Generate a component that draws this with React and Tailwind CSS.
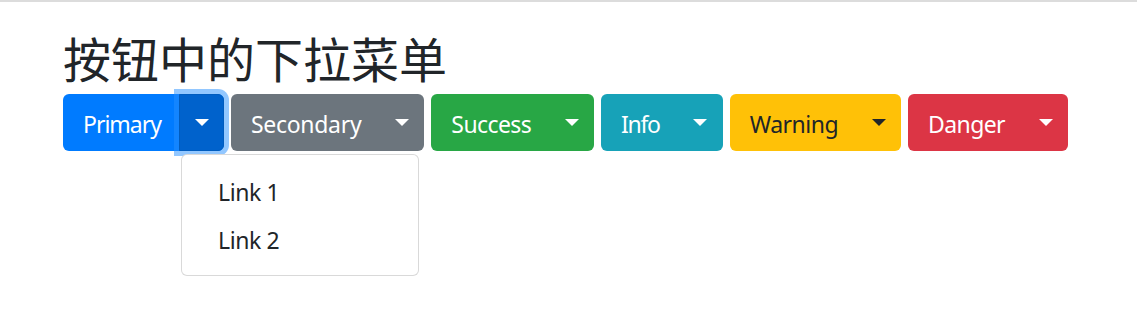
import React from "react";

const groups = [
  { label: "Primary", track: "tracking-[-1px]", bg: "bg-[#007bff]", text: "text-white", toggle: "bg-[#0062cc] border-[#005cbf] shadow-[0_0_0_5px_rgba(38,143,255,0.5)] z-10", open: true },
  { label: "Secondary", track: "tracking-[-0.3px]", bg: "bg-[#6c757d]", text: "text-white" },
  { label: "Success", track: "tracking-[-0.6px]", bg: "bg-[#28a745]", text: "text-white" },
  { label: "Info", track: "tracking-[-1.3px]", bg: "bg-[#17a2b8]", text: "text-white" },
  { label: "Warning", track: "tracking-[-0.5px]", bg: "bg-[#ffc107]", text: "text-[#212529]" },
  { label: "Danger", track: "tracking-[-0.6px]", bg: "bg-[#dc3545]", text: "text-white" },
];

function Caret() {
  return (
    <span className="block w-0 h-0 border-t-[7.5px] border-t-current border-x-[7.5px] border-x-transparent" />
  );
}

export default function App() {
  return (
    <div className="min-h-[312px] bg-white border-t-2 border-[#dcdcdc] text-[#212529] font-['Noto_Sans','Noto_Sans_CJK_SC',sans-serif]">
      <div className="px-[63px] pt-[26px]">
        <h1 className="text-[48px] leading-[58px] mb-2 font-normal font-['Noto_Sans_CJK_SC',sans-serif]">
          按钮中的下拉菜单
        </h1>
        <div className="flex gap-[7px]">
          {groups.map((g) => (
            <div key={g.label} className={`flex rounded-[6px] ${g.bg} ${g.text}`}>
              <button
                className={`h-[57px] border border-transparent pl-[19px] pr-[17px] pt-[2px] text-[23px] leading-[36px] bg-transparent ${g.track}`}
              >
                {g.label}
              </button>
              <div className="relative flex">
                <button
                  className={`relative h-[57px] w-[45px] border flex items-center justify-center rounded-r-[6px] ${g.toggle ? g.toggle : "border-transparent bg-transparent"}`}
                >
                  <Caret />
                </button>
                {g.open && (
                  <div className="absolute left-[2px] top-[60px] w-[238px] h-[122px] pt-[13px] bg-white border border-[rgba(0,0,0,0.15)] rounded-[6px] z-20">
                    <div className="pl-[36px] pr-9 py-1.5 text-[23px] leading-[36px] tracking-[-0.4px] text-[#212529]">Link 1</div>
                    <div className="pl-[36px] pr-9 py-1.5 text-[23px] leading-[36px] tracking-[-0.4px] text-[#212529]">Link 2</div>
                  </div>
                )}
              </div>
            </div>
          ))}
        </div>
      </div>
    </div>
  );
}
